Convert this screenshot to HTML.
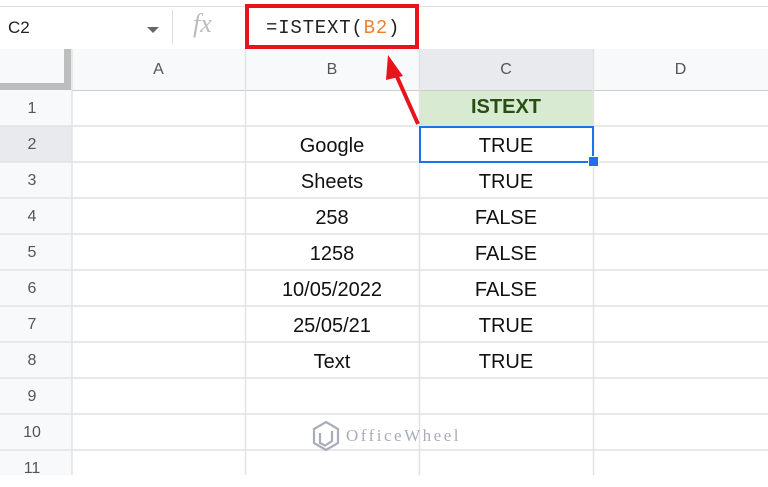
<!DOCTYPE html><html><head><style>
body{margin:0;width:768px;height:475px;overflow:hidden;background:#fff;font-family:"Liberation Sans",Arial,sans-serif;position:relative}
.a{position:absolute}
.cell{position:absolute;text-align:center;color:#111;font-size:20px}
</style></head><body>
<div class="a" style="left:0;top:0;width:768px;height:49px;background:#fff;border-bottom:1px solid #ccc"></div>
<div class="a" style="left:0;top:6px;width:768px;height:1px;background:#e0e0e0"></div>
<div class="a" style="left:8px;top:18px;font-size:17px;color:#222">C2</div>
<div class="a" style="left:147px;top:27px;width:0;height:0;border-left:6px solid transparent;border-right:6px solid transparent;border-top:6px solid #666"></div>
<div class="a" style="left:172px;top:10px;width:1px;height:34px;background:#ddd"></div>
<div class="a" style="left:193px;top:9px;font-size:26px;color:#bbb;font-family:'Liberation Serif',serif;font-style:italic">fx</div>
<div class="a" style="left:245px;top:4px;width:166px;height:37px;border:4px solid #e8141b"></div>
<div class="a" style="left:266px;top:17px;font-size:19px;color:#222;font-family:'Liberation Mono',monospace;letter-spacing:0.8px">=ISTEXT(<span style="color:#f08030">B2</span>)</div>
<div class="a" style="left:0;top:49px;width:768px;height:41px;background:#f8f9fa;border-bottom:1px solid #ccc"></div>
<div class="a" style="left:419px;top:49px;width:174px;height:41px;background:#e8eaed"></div>
<div class="a" style="left:0;top:90px;width:72px;height:385px;background:#f8f9fa"></div>
<div class="a" style="left:0;top:126px;width:72px;height:36px;background:#e8eaed"></div>
<div class="a" style="left:64px;top:49px;width:7px;height:41px;background:#bdbdbd"></div>
<div class="a" style="left:0;top:83px;width:71px;height:7px;background:#bdbdbd"></div>
<div class="a" style="left:420px;top:91px;width:173px;height:35px;background:#d9ead3"></div>
<svg class="a" style="left:0;top:0" width="768" height="475">
<g stroke="#e2e2e2" stroke-width="1.5">
<line x1="72" y1="49" x2="72" y2="475"/><line x1="245.5" y1="49" x2="245.5" y2="475"/><line x1="419.5" y1="49" x2="419.5" y2="475"/><line x1="593.5" y1="49" x2="593.5" y2="475"/>
<line x1="0" y1="126" x2="768" y2="126"/><line x1="0" y1="162" x2="768" y2="162"/><line x1="0" y1="198" x2="768" y2="198"/><line x1="0" y1="234" x2="768" y2="234"/><line x1="0" y1="270" x2="768" y2="270"/><line x1="0" y1="306" x2="768" y2="306"/><line x1="0" y1="342" x2="768" y2="342"/><line x1="0" y1="378" x2="768" y2="378"/><line x1="0" y1="414" x2="768" y2="414"/><line x1="0" y1="450" x2="768" y2="450"/>
</g>
<line x1="418" y1="124" x2="394" y2="70" stroke="#e8141b" stroke-width="4"/>
<polygon points="388,55 403,76 386,80" fill="#e8141b"/>
</svg>
<div class="a" style="left:419px;top:126px;width:171px;height:33px;border:2px solid #1a73e8"></div>
<div class="a" style="left:588px;top:156px;width:9px;height:9px;background:#1a73e8;border:1px solid #fff"></div>
<div class="a" style="left:72px;top:61px;width:173px;text-align:center;color:#555;font-size:16px">A</div>
<div class="a" style="left:245px;top:61px;width:174px;text-align:center;color:#555;font-size:16px">B</div>
<div class="a" style="left:419px;top:61px;width:174px;text-align:center;color:#555;font-size:16px">C</div>
<div class="a" style="left:593px;top:61px;width:175px;text-align:center;color:#555;font-size:16px">D</div>
<div class="a" style="left:0;top:91px;width:64px;text-align:center;color:#555;font-size:16px;line-height:36px">1<br>2<br>3<br>4<br>5<br>6<br>7<br>8<br>9<br>10<br>11</div>
<div class="cell" style="left:419px;top:96px;width:174px;font-weight:bold;color:#274e13">ISTEXT</div>
<div class="a" style="left:245px;top:128px;width:174px;text-align:center;font-size:20px;line-height:36px;color:#111">Google<br>Sheets<br>258<br>1258<br>10/05/2022<br>25/05/21<br>Text</div>
<div class="a" style="left:419px;top:128px;width:174px;text-align:center;font-size:20px;line-height:36px;color:#111">TRUE<br>TRUE<br>FALSE<br>FALSE<br>FALSE<br>TRUE<br>TRUE</div>
<svg class="a" style="left:312px;top:420px" width="28" height="32"><path d="M14 2 L26 9 L26 23 L14 30 L2 23 L2 9 Z M8 13 L8 23 L14 26 M20 11 L20 21 L14 25" fill="none" stroke="#a8adb8" stroke-width="2.2"/></svg>
<div class="a" style="left:346px;top:426px;font-size:17px;color:#a8adb8;letter-spacing:2.5px;font-family:'Liberation Serif',serif">OfficeWheel</div>
</body></html>
